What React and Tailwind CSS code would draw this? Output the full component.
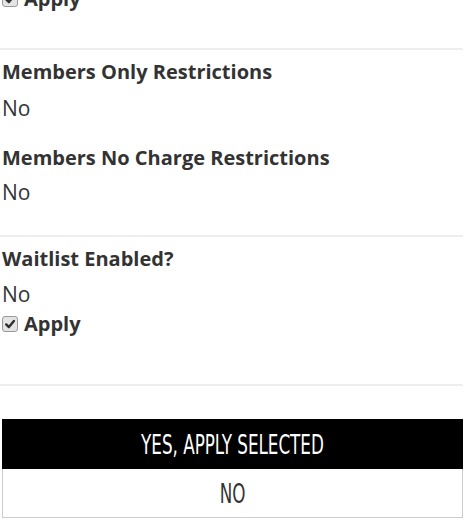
export default function App() {
  const body = { fontFamily: '"Open Sans", "Noto Sans", sans-serif' };
  const cond = {
    fontFamily: '"DejaVu Sans Condensed", "Liberation Sans Narrow", sans-serif',
    fontStretch: "condensed",
  };

  return (
    <div className="h-[528px] w-[474px] overflow-hidden bg-white text-[#333]" style={body}>
      <div className="pr-[11px]">
        {/* previous item, cut off at the top */}
        <div className="-mt-[16px] flex items-center gap-[6px] pl-[2px] text-[20px] leading-[30px] font-bold">
          <CheckBox />
          <span>Apply</span>
        </div>
        <hr className="mt-[34px] border-0 border-t-2 border-[#eeeeee]" />

        <div className="mt-[7px]">
          <h4 className="text-[20px] leading-[30px] font-bold pl-[2px]">Members Only Restrictions</h4>
          <p className="mt-[6px] text-[21px] leading-[30px] pl-[2px]">No</p>
          <h4 className="mt-[20px] text-[20px] leading-[30px] font-bold pl-[2px]">Members No Charge Restrictions</h4>
          <p className="mt-[4px] text-[21px] leading-[30px] pl-[2px]">No</p>
        </div>
        <hr className="mt-[28px] border-0 border-t-2 border-[#eeeeee]" />

        <div className="mt-[7px]">
          <h4 className="text-[20px] leading-[30px] font-bold pl-[2px]">Waitlist Enabled?</h4>
          <p className="mt-[5px] text-[21px] leading-[30px] pl-[2px]">No</p>
          <label className="flex items-center gap-[6px] pl-[2px] text-[20px] leading-[30px] font-bold">
            <CheckBox />
            <span>Apply</span>
          </label>
        </div>
        <hr className="mt-[45px] border-0 border-t-2 border-[#eeeeee]" />

        <div className="mt-[33px] ml-[2px] flex flex-col" style={cond}>
          <button className="flex h-[50px] items-center justify-center bg-black pt-[3px] text-white text-[27px] uppercase">
            <span className="inline-block scale-x-[0.69]">Yes, Apply Selected</span>
          </button>
          <button className="flex h-[49px] items-center justify-center border border-[#cccccc] border-t-0 bg-white pt-[3px] text-[#333] text-[27px] uppercase">
            <span className="inline-block scale-x-[0.69]">No</span>
          </button>
        </div>
      </div>
    </div>
  );
}

function CheckBox() {
  return (
    <span className="flex h-[16px] w-[16px] shrink-0 items-center justify-center rounded-[3px] border border-[#9a9a9a] bg-[#e4e4e4]">
      <svg viewBox="0 0 12 12" className="h-[12px] w-[12px]">
        <path d="M2.2 6.4 L4.9 9.1 L9.9 2.9" fill="none" stroke="#2f2f2f" strokeWidth="2.4" strokeLinecap="round" strokeLinejoin="round" />
      </svg>
    </span>
  );
}
